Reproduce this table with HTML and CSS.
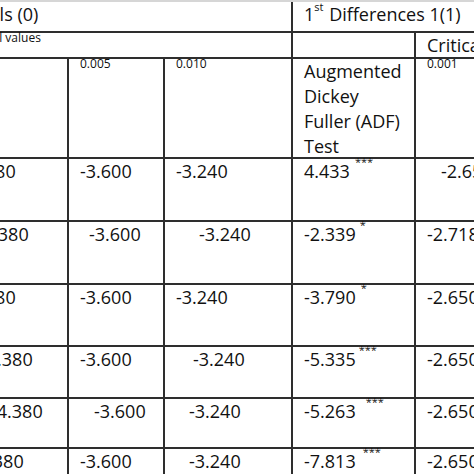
FILE: index.html
```html
<!DOCTYPE html>
<html lang="en">
<head>
<meta charset="utf-8">
<title>Unit root test results</title>
<link rel="stylesheet" href="styles.css">
</head>
<body>
<div class="sheet">
  <div class="grid">
    <div class="c span3 lead">Levels (0)</div>
    <div class="c span2">1<sup class="ord">st</sup> Differences 1(1)</div>

    <div class="c span3 small">Critical values</div>
    <div class="c"></div>
    <div class="c nowrap">Critical values</div>

    <div class="c"></div>
    <div class="c small">0.005</div>
    <div class="c small">0.010</div>
    <div class="c">Augmented Dickey Fuller (ADF) Test</div>
    <div class="c small">0.001</div>

    <div class="c">-4.380</div>
    <div class="c">-3.600</div>
    <div class="c">-3.240</div>
    <div class="c">4.433<sup class="sig sig-5">***</sup></div>
    <div class="c in-14">-2.650</div>

    <div class="c in-13">-4.380</div>
    <div class="c in-9">-3.600</div>
    <div class="c in-23">-3.240</div>
    <div class="c">-2.339<sup class="sig sig-4">*</sup></div>
    <div class="c">-2.718</div>

    <div class="c">-4.380</div>
    <div class="c">-3.600</div>
    <div class="c">-3.240</div>
    <div class="c">-3.790<sup class="sig sig-5">*</sup></div>
    <div class="c">-2.650</div>

    <div class="c in-17">-4.380</div>
    <div class="c">-3.600</div>
    <div class="c in-17">-3.240</div>
    <div class="c">-5.335<sup class="sig sig-3">***</sup></div>
    <div class="c">-2.650</div>

    <div class="c in-27">-4.380</div>
    <div class="c in-14">-3.600</div>
    <div class="c in-13">-3.240</div>
    <div class="c">-5.263<sup class="sig sig-10">***</sup></div>
    <div class="c">-2.650</div>

    <div class="c in-8">-4.380</div>
    <div class="c">-3.600</div>
    <div class="c in-13">-3.240</div>
    <div class="c">-7.813<sup class="sig sig-7">***</sup></div>
    <div class="c">-2.650</div>
  </div>
</div>
</body>
</html>
```

FILE: styles.css
```css
html, body {
  margin: 0;
  padding: 0;
  background: #ffffff;
  overflow: hidden;
}

.sheet {
  width: 474px;
  height: 474px;
  overflow: hidden;
  border-top: 2px solid #d6d6d6;
  box-sizing: border-box;
}

.grid {
  display: grid;
  grid-template-columns: 114px 94px 126px 121px 150px;
  grid-template-rows: 29px 24px 98px 61px 61px 60px 50px 48px 61px;
  gap: 2px;
  width: max-content;
  margin-left: -47px;
  background: #2e2e2e;
}

.c {
  background: #ffffff;
  padding: 0 4px 0 11px;
  font-family: "Open Sans", "Liberation Sans", sans-serif;
  font-size: 18px;
  line-height: 25px;
  color: #111111;
}

.span3 { grid-column: span 3; }
.span2 { grid-column: span 2; }

.lead { padding-left: 8px; }

.nowrap { white-space: nowrap; }

.small {
  font-size: 12px;
  line-height: 10px;
}

.ord {
  font-size: 11px;
  line-height: 0;
  vertical-align: 10px;
  margin-right: 1px;
}

.sig {
  font-size: 11px;
  line-height: 0;
  vertical-align: 12px;
}

.sig-3 { margin-left: 3px; }
.sig-4 { margin-left: 4px; }
.sig-5 { margin-left: 5px; }
.sig-7 { margin-left: 7px; }
.sig-10 { margin-left: 10px; }

.in-8 { padding-left: 19px; }
.in-9 { padding-left: 20px; }
.in-13 { padding-left: 24px; }
.in-14 { padding-left: 25px; }
.in-17 { padding-left: 28px; }
.in-23 { padding-left: 34px; }
.in-27 { padding-left: 38px; }
```
